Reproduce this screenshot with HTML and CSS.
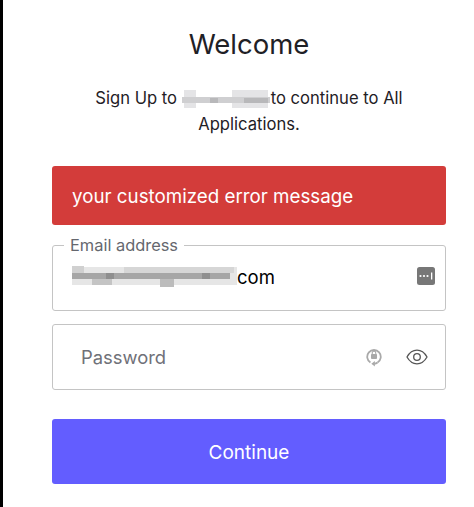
FILE: index.html
```html
<!DOCTYPE html>
<html lang="en">
<head>
    <meta charset="UTF-8">
    <meta name="viewport" content="width=device-width, initial-scale=1.0">
    <title>Welcome</title>
    <link rel="stylesheet" href="styles.css">
</head>
<body>
<div class="container">
    <h1>Welcome</h1>
    <p class="intro">Sign Up to <span class="blur blur-name"></span>to continue to All Applications.</p>
    <div class="error">your customized error message</div>
    <fieldset class="field email-field">
        <legend>Email address</legend>
        <div class="field-value"><span class="blur blur-email"></span>com</div>
        <svg class="icon-key" width="18" height="18" viewBox="0 0 18 18">
            <rect width="18" height="18" rx="2.5" fill="#777"/>
            <circle cx="3.5" cy="9" r="1.1" fill="#fff"/>
            <circle cx="7" cy="9" r="1.1" fill="#fff"/>
            <circle cx="10.5" cy="9" r="1.1" fill="#fff"/>
            <rect x="14" y="5.5" width="1.3" height="7" fill="#fff"/>
        </svg>
    </fieldset>
    <div class="field password-field">
        <span class="placeholder">Password</span>
        <svg class="icon-lock" width="16" height="20" viewBox="0 0 18 22" fill="none">
            <path d="M5 17.2A7.6 7.6 0 1 1 13 17.2" stroke="#a9a9a9" stroke-width="2"/>
            <path d="M13 17.2c-1 .8-2.2 1.3-3.6 1.4" stroke="#a9a9a9" stroke-width="2"/>
            <path d="M10 15.6v6l-4-3z" fill="#a9a9a9"/>
            <rect x="5.6" y="7.6" width="6.8" height="5.6" rx="1" fill="#a9a9a9"/>
            <path d="M7 8V6.4a2 2 0 0 1 4 0V8" stroke="#a9a9a9" stroke-width="1.2"/>
        </svg>
        <svg class="icon-eye" width="22" height="16" viewBox="0 0 22 16" fill="none">
            <path d="M1 8C3.5 3.6 7 1.2 11 1.2S18.500 3.600 21 8c-2.500 4.400-6 6.800-10 6.800S3.500 12.400 1 8z" stroke="#555" stroke-width="1.300"/>
            <circle cx="11" cy="8" r="3.300" stroke="#555" stroke-width="1.300"/>
        </svg>
    </div>
    <button class="continue">Continue</button>
</div>
</body>
</html>
```
FILE: styles.css
```css
/* Page */
* {
    box-sizing: border-box;
}

html, body {
    height: 100%;
}

body {
    margin: 0;
    background: #FFFFFF;
    border-left: 3px solid #000000;
    font-family: Inter, 'Noto Sans', sans-serif;
    color: #1f2126;
    overflow: hidden;
}

.container {
    width: 394px;
    margin-left: 49px;
    padding-top: 25px;
}

h1 {
    margin: 0;
    font-size: 27.500px;
    line-height: 38px;
    font-weight: 400;
    text-align: center;
}

.intro {
    width: 340px;
    margin: 22px auto 0;
    font-size: 16.600px;
    line-height: 26px;
    text-align: center;
}

/* Pixelated patches that hide the name and address */
.blur {
    display: inline-block;
    vertical-align: middle;
    filter: blur(0.6px);
}

.blur-name {
    width: 88px;
    height: 18px;
    margin-right: 1px;
    background:
        linear-gradient(#b8b8ba, #b8b8ba) 28px 8px / 8px 5px no-repeat,
        linear-gradient(#b8b8ba, #b8b8ba) 62px 8px / 24px 5px no-repeat,
        linear-gradient(#cfcfd1, #cfcfd1) 0 7px / 88px 6px no-repeat,
        linear-gradient(#e4e4e6, #e4e4e6) 2px 0 / 12px 18px no-repeat,
        linear-gradient(#e4e4e6, #e4e4e6) 50px 0 / 36px 18px no-repeat;
}

.blur-email {
    width: 165px;
    height: 22px;
    background:
        linear-gradient(#8f8f8f, #8f8f8f) 34px 7px / 8px 6px no-repeat,
        linear-gradient(#8f8f8f, #8f8f8f) 130px 7px / 8px 6px no-repeat,
        linear-gradient(#a6a6a6, #a6a6a6) 0 7px / 158px 6px no-repeat,
        linear-gradient(#c4c4c4, #c4c4c4) 20px 13px / 20px 6px no-repeat,
        linear-gradient(#bcbcbc, #bcbcbc) 88px 13px / 14px 8px no-repeat,
        linear-gradient(#d0d0d0, #d0d0d0) 0 0 / 12px 7px no-repeat,
        linear-gradient(#d6d6d6, #d6d6d6) 52px 1px / 110px 6px no-repeat,
        linear-gradient(#e6e6e6, #e6e6e6) 0 1px / 165px 18px no-repeat;
}

.error {
    height: 59px;
    margin-top: 29px;
    padding-left: 20px;
    background: #d33c3a;
    border-radius: 3px;
    color: #FFFFFF;
    font-size: 18.750px;
    line-height: 61px;
}

/* Fields */
.field {
    display: flex;
    align-items: center;
    margin: 0;
    border: 1px solid #c4c4c4;
    border-radius: 3px;
}

.email-field {
    height: 76px;
    margin-top: 10px;
    padding: 0 10px 11px 11px;
}

.email-field legend {
    padding: 0 6px;
    font-size: 16.400px;
    line-height: 20px;
    color: #65676e;
}

.field-value {
    flex: 1;
    padding-left: 8px;
    font-size: 18.500px;
    color: #000000;
    display: flex;
    align-items: center;
}

.icon-key {
    margin-bottom: 3px;
}

.password-field {
    height: 66px;
    margin-top: 13px;
    padding: 0 17px 0 28px;
}

.placeholder {
    flex: 1;
    font-size: 18.400px;
    color: #6f7178;
}

.icon-lock {
    margin-right: 24px;
}

.continue {
    display: block;
    width: 100%;
    height: 65px;
    margin-top: 29px;
    padding-top: 3px;
    border: none;
    border-radius: 3px;
    background: #635dff;
    color: #FFFFFF;
    font-family: Inter, 'Noto Sans', sans-serif;
    font-size: 19px;
}
```
